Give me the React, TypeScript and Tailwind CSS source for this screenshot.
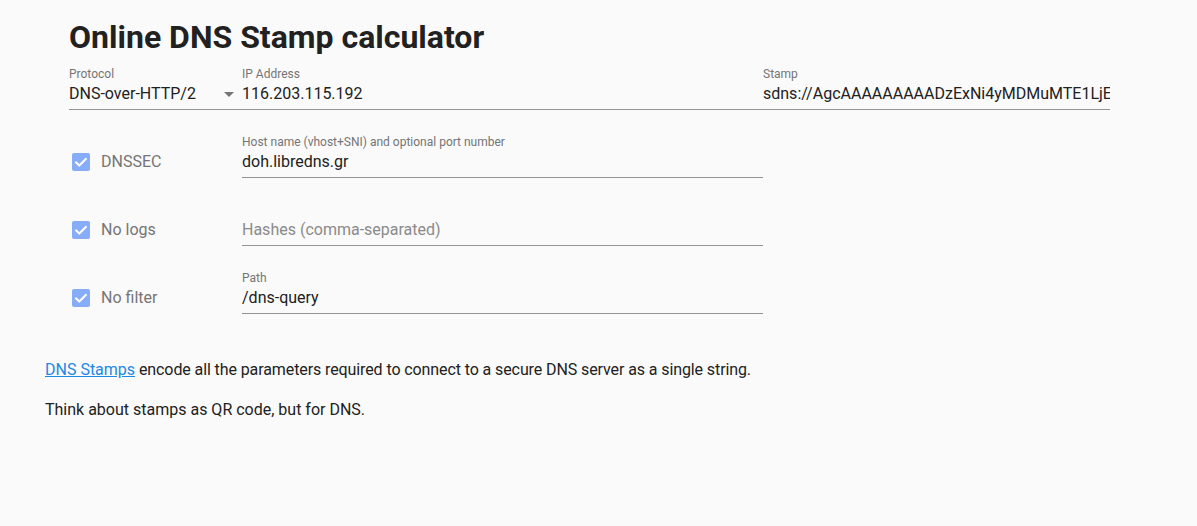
import React from "react";

function Check() {
  return (
    <span className="flex h-[18px] w-[18px] items-center justify-center rounded-[2px] bg-[#87acf8]">
      <svg width="18" height="18" viewBox="0 0 24 24" fill="none">
        <path d="M5.5 12.5l4.2 4.2L18.5 8" stroke="#fff" strokeWidth="2.6" strokeLinecap="square" />
      </svg>
    </span>
  );
}

function Field({ label, value, placeholder }: { label?: string; value?: string; placeholder?: string }) {
  return (
    <div className="flex w-[521px] flex-col border-b border-[#949494]">
      <div className="h-4 text-[12px] leading-4 text-[#757575]">{label ?? ""}</div>
      <div className="h-[27px] pb-[3px] text-[16px] leading-6">
        {value ? <span className="text-[#212121]">{value}</span> : <span className="text-[#8a8a8a]">{placeholder}</span>}
      </div>
    </div>
  );
}

function CheckRow({ text, label, value, placeholder }: { text: string; label?: string; value?: string; placeholder?: string }) {
  return (
    <div className="mt-6 flex">
      <div className="flex w-[173px] flex-col">
        <div className="h-4" />
        <div className="flex h-6 items-center gap-[11px] pl-[3px]">
          <Check />
          <span className="text-[16px] text-[#757575]">{text}</span>
        </div>
      </div>
      <Field label={label} value={value} placeholder={placeholder} />
    </div>
  );
}

export default function App() {
  return (
    <div className="min-h-[526px] w-full bg-[#fafafa] font-['Roboto',sans-serif] text-[#212121]">
      <div className="px-[69px] pt-[17px]">
        <h1 className="h-10 text-[32px] font-bold leading-10 text-[#212121]">Online DNS Stamp calculator</h1>
        <div className="mt-[9px] flex w-[1041px] border-b border-[#949494]">
          <div className="flex w-[173px] flex-col">
            <div className="h-4 text-[12px] leading-4 text-[#757575]">Protocol</div>
            <div className="flex h-[27px] pb-[3px] text-[16px] leading-6">
              <span className="flex-1">DNS-over-HTTP/2</span>
              <span className="mr-[8px] mt-[10px] h-0 w-0 border-x-[5px] border-t-[5px] border-x-transparent border-t-[#757575]" />
            </div>
          </div>
          <div className="flex w-[521px] flex-col">
            <div className="h-4 text-[12px] leading-4 text-[#757575]">IP Address</div>
            <div className="h-[27px] pb-[3px] text-[16px] leading-6">116.203.115.192</div>
          </div>
          <div className="flex w-[347px] flex-col overflow-hidden">
            <div className="h-4 text-[12px] leading-4 text-[#757575]">Stamp</div>
            <div className="h-[27px] overflow-hidden whitespace-nowrap pb-[3px] text-[16px] leading-6">
              sdns://AgcAAAAAAAAADzExNi4yMDMuMTE1LjE5MgAPZG9oLmxpYnJlZG5zLmdyCi9kbnMtcXVlcnk
            </div>
          </div>
        </div>
        <CheckRow text="DNSSEC" label="Host name (vhost+SNI) and optional port number" value="doh.libredns.gr" />
        <CheckRow text="No logs" placeholder="Hashes (comma-separated)" />
        <CheckRow text="No filter" label="Path" value="/dns-query" />
      </div>
      <div className="mt-[44px] px-[45px] text-[16px] leading-6">
        <p>
          <a href="#" className="text-[#1e88e5] underline">DNS Stamps</a>
          <span className="tracking-[-0.1px]"> encode all the parameters required to connect to a secure DNS server as a single string.</span>
        </p>
        <p className="mt-[16px]">Think about stamps as QR code, but for DNS.</p>
      </div>
    </div>
  );
}
